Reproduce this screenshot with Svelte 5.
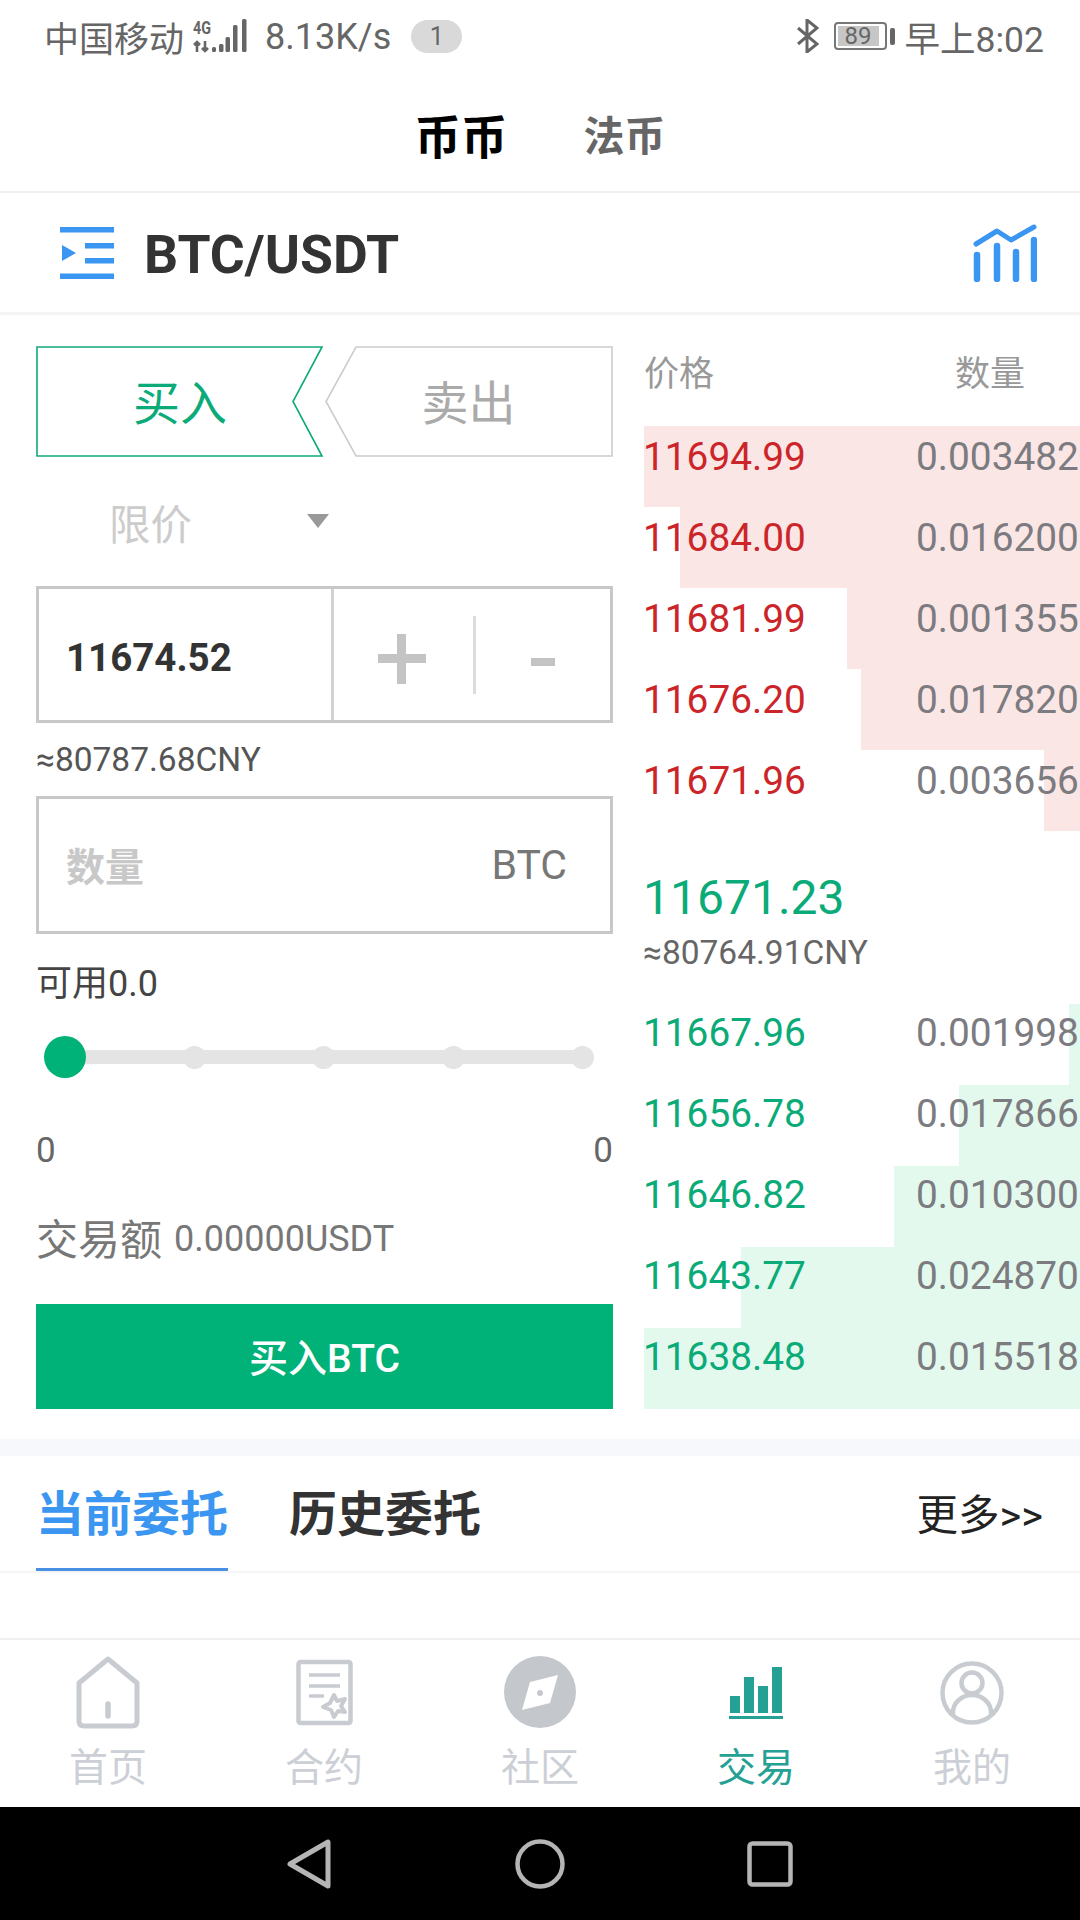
<script>
  const asks = [
    { p: '11694.99', q: '0.003482', w: 436 },
    { p: '11684.00', q: '0.016200', w: 400 },
    { p: '11681.99', q: '0.001355', w: 233 },
    { p: '11676.20', q: '0.017820', w: 219 },
    { p: '11671.96', q: '0.003656', w: 36 }
  ];
  const bids = [
    { p: '11667.96', q: '0.001998', w: 11 },
    { p: '11656.78', q: '0.017866', w: 121 },
    { p: '11646.82', q: '0.010300', w: 186 },
    { p: '11643.77', q: '0.024870', w: 339 },
    { p: '11638.48', q: '0.015518', w: 436 }
  ];
</script>

<div class="page">
  <header class="status">
    <span>中国移动</span>
    <svg class="signal" width="54" height="40" viewBox="0 -3 54 40">
      <text x="0" y="15" font-size="18" font-weight="700" textLength="18" lengthAdjust="spacingAndGlyphs" font-family="Roboto" fill="#666">4G</text>
      <path d="M4 33V23M1 26l3-3 3 3M12 22v10M9 29l3 3 3-3" fill="none" stroke="#666" stroke-width="2.6" />
      <rect x="19" y="28" width="4" height="5" rx="1.5" fill="#666" />
      <rect x="26" y="25" width="4.5" height="8" rx="1.5" fill="#666" />
      <rect x="32.5" y="18" width="4.5" height="15" rx="1.5" fill="#666" />
      <rect x="40" y="6" width="4.5" height="27" rx="1.5" fill="#666" />
      <rect x="49" y="0" width="4.5" height="33" rx="1.5" fill="#666" />
    </svg>
    <span class="speed">8.13K/s</span>
    <span class="badge">1</span>
    <span class="spacer"></span>
    <svg class="bt" width="22" height="34" viewBox="0 0 22 34">
      <path d="M1 9 20 25 10 33V1L20 9 1 25" fill="none" stroke="#666" stroke-width="3" />
    </svg>
    <span class="battery"><span class="level">89</span></span>
    <span class="nub"></span>
    <span class="time">早上8:02</span>
  </header>

  <nav class="market">
    <span class="m-on">币币</span>
    <span class="m-off">法币</span>
  </nav>

  <section class="pair">
    <svg width="54" height="52" viewBox="0 0 54 52">
      <g fill="#3a96f0">
        <rect x="0" y="0" width="54" height="5.5" />
        <rect x="25" y="16" width="29" height="5.5" />
        <rect x="25" y="31" width="29" height="5.5" />
        <rect x="0" y="46.5" width="54" height="5.5" />
        <path d="M2 18 16 26 2 34Z" />
      </g>
    </svg>
    <span class="pair-name">BTC/USDT</span>
    <span class="spacer"></span>
    <svg width="64" height="58" viewBox="0 0 64 58">
      <path d="M3 20 24 7 38 16 61 3" fill="none" stroke="#3a96f0" stroke-width="5" stroke-linecap="round" stroke-linejoin="round" />
      <g stroke="#3a96f0" stroke-width="6.5" stroke-linecap="round">
        <path d="M4 31V55M24 22V55M43 28V55M61 16V55" />
      </g>
    </svg>
  </section>

  <main class="trade">
    <div class="form">
      <div class="sides">
        <div class="side">
          <svg width="288" height="111" viewBox="0 0 288 111">
            <path d="M1 1H286L257 55.5 286 110H1Z" fill="#fff" stroke="#0fa97b" stroke-width="1.6" />
          </svg>
          <span class="side-text buy">买入</span>
        </div>
        <div class="side">
          <svg width="289" height="111" viewBox="0 0 289 111">
            <path d="M32 1H288V110H32L2 55.5Z" fill="#fff" stroke="#ccc" stroke-width="1.6" />
          </svg>
          <span class="side-text sell">卖出</span>
        </div>
      </div>

      <div class="order-type">
        <span class="limit">限价</span>
        <svg width="24" height="16" viewBox="0 0 24 16"><path d="M1 1H23L12 15Z" fill="#999" /></svg>
      </div>

      <div class="box price-box">
        <span class="price-val">11674.52</span>
        <div class="steppers">
          <span class="step plus"><i></i><b></b></span>
          <span class="step-line"></span>
          <span class="step minus"><i></i></span>
        </div>
      </div>
      <div class="approx">≈80787.68CNY</div>

      <div class="box qty-box">
        <span class="qty-label">数量</span>
        <span class="qty-unit">BTC</span>
      </div>

      <div class="avail">可用0.0</div>

      <div class="slider">
        <span class="thumb"></span>
        <span class="dot"></span>
        <span class="dot"></span>
        <span class="dot"></span>
        <span class="dot"></span>
      </div>

      <div class="ends"><span>0</span><span>0</span></div>

      <div class="amount"><span class="amount-label">交易额</span><span class="amount-val">0.00000USDT</span></div>

      <button class="submit">买入BTC</button>
    </div>

    <div class="book">
      <div class="book-head"><span class="h-price">价格</span><span class="h-qty">数量</span></div>
      {#each asks as r}
        <div class="row">
          <span class="bar ask" style="width:{r.w}px"></span>
          <span class="r-p red">{r.p}</span>
          <span class="r-q red-q">{r.q}</span>
        </div>
      {/each}
      <div class="mid">
        <div class="mid-price">11671.23</div>
        <div class="mid-cny">≈80764.91CNY</div>
      </div>
      {#each bids as r}
        <div class="row">
          <span class="bar bid" style="width:{r.w}px"></span>
          <span class="r-p green">{r.p}</span>
          <span class="r-q">{r.q}</span>
        </div>
      {/each}
    </div>
  </main>

  <div class="band"></div>

  <section class="orders">
    <span class="o-tab o-on">当前委托</span>
    <span class="o-tab">历史委托</span>
    <span class="spacer"></span>
    <span class="more">更多&gt;&gt;</span>
  </section>
  <div class="empty"></div>

  <footer class="tabbar">
    <div class="tab">
      <svg width="80" height="80" viewBox="0 0 80 80">
        <path d="M40 7 69 31V69Q69 74 64 74H16Q11 74 11 69V31Z" fill="none" stroke="#c8ccd1" stroke-width="5" stroke-linejoin="round" />
        <path d="M40 52V64" stroke="#c8ccd1" stroke-width="5.5" stroke-linecap="round" />
      </svg>
      <span>首页</span>
    </div>
    <div class="tab">
      <svg width="80" height="80" viewBox="0 0 80 80">
        <rect x="14.5" y="10" width="52" height="61" rx="2" fill="none" stroke="#c8ccd1" stroke-width="4.5" />
        <path d="M25 23H56M25 34H56M25 44H40" stroke="#c8ccd1" stroke-width="3.5" />
        <path d="M50 43 53 49 61 47 57 54 61 60 54 59 50 65 47 58 39 55 46 51Z" fill="none" stroke="#c8ccd1" stroke-width="4" stroke-linejoin="round" />
      </svg>
      <span>合约</span>
    </div>
    <div class="tab">
      <svg width="80" height="80" viewBox="0 0 80 80">
        <circle cx="40" cy="40" r="36" fill="#c4c7cb" />
        <path d="M30 30 58 23 50 51 22 58Z" fill="#fff" />
        <circle cx="40" cy="41" r="3" fill="#c4c7cb" />
      </svg>
      <span>社区</span>
    </div>
    <div class="tab active">
      <svg width="80" height="80" viewBox="0 0 80 80">
        <g fill="#25a094">
          <rect x="14" y="44" width="10" height="17" />
          <rect x="28" y="25" width="10" height="36" />
          <rect x="42" y="34" width="10" height="27" />
          <rect x="56" y="15" width="10" height="46" />
          <rect x="13" y="64" width="54" height="3" />
        </g>
      </svg>
      <span>交易</span>
    </div>
    <div class="tab">
      <svg width="80" height="80" viewBox="0 0 80 80">
        <circle cx="40" cy="41" r="29.5" fill="none" stroke="#c8ccd1" stroke-width="4.5" />
        <circle cx="40" cy="31" r="10.5" fill="none" stroke="#c8ccd1" stroke-width="4.5" />
        <path d="M21 62C20 50 31 43 40 43 49 43 60 50 59 62" fill="none" stroke="#c8ccd1" stroke-width="4.5" />
      </svg>
      <span>我的</span>
    </div>
  </footer>

  <div class="sysnav">
    <svg width="46" height="52" viewBox="0 0 46 52">
      <path d="M3 26 41 4V48Z" fill="none" stroke="#b5b5b5" stroke-width="5" stroke-linejoin="round" />
    </svg>
    <svg width="50" height="50" viewBox="0 0 50 50">
      <circle cx="25" cy="25" r="22.5" fill="none" stroke="#b5b5b5" stroke-width="4.5" />
    </svg>
    <svg width="46" height="46" viewBox="0 0 46 46">
      <rect x="2.5" y="2.5" width="41" height="41" rx="3" fill="none" stroke="#b5b5b5" stroke-width="4.5" />
    </svg>
  </div>
</div>

<style>
  :global(body) {
    margin: 0;
    background: #fff;
  }
  .page {
    width: 1080px;
    height: 1920px;
    display: flex;
    flex-direction: column;
    overflow: hidden;
    background: #fff;
    font-family: Roboto, "Noto Sans CJK SC", sans-serif;
    color: #333;
  }
  .spacer {
    flex: 1;
  }

  /* status bar */
  .status {
    height: 75px;
    display: flex;
    align-items: center;
    padding: 0 36px 3px 44px;
    font-size: 35px;
    color: #666;
    box-sizing: border-box;
  }
  .signal {
    margin-left: 9px;
  }
  .speed {
    margin-left: 18px;
    margin-top: 1px;
    font-size: 36px;
  }
  .badge {
    margin-left: 20px;
    width: 51px;
    height: 33px;
    border-radius: 17px;
    background: #d9d9d9;
    font-size: 25px;
    display: flex;
    align-items: center;
    justify-content: center;
  }
  .battery {
    width: 53px;
    height: 28px;
    margin-left: 15px;
    box-sizing: border-box;
    border: 2px solid #777;
    border-radius: 4px;
    padding: 2px;
    display: flex;
  }
  .level {
    flex: 0 0 41px;
    background: #c6c6c6;
    font-size: 24px;
    line-height: 20px;
    text-align: center;
  }
  .nub {
    width: 5px;
    height: 17px;
    margin-left: 3px;
    background: #666;
    border-radius: 2px;
  }
  .time {
    margin-left: 10px;
    font-size: 35.5px;
  }

  /* market tabs */
  .market {
    height: 118px;
    box-sizing: border-box;
    border-bottom: 2px solid #f0f0f0;
    display: flex;
    align-items: center;
    justify-content: center;
    gap: 76px;
    font-weight: 700;
  }
  .m-on {
    font-size: 46.5px;
    color: #000;
  }
  .m-off {
    font-size: 41px;
    color: #666;
  }

  /* pair */
  .pair {
    height: 122px;
    box-sizing: border-box;
    border-bottom: 3px solid #f5f5f5;
    display: flex;
    align-items: center;
    padding: 1px 43px 0 60px;
  }
  .pair-name {
    margin-left: 30px;
    margin-top: 2px;
    font-size: 53.5px;
    font-weight: 700;
    color: #333;
  }

  /* trade */
  .trade {
    display: flex;
    padding-bottom: 30px;
  }
  .form {
    width: 577px;
    margin-left: 36px;
    padding-top: 31px;
    display: flex;
    flex-direction: column;
  }
  .sides {
    display: flex;
    height: 111px;
  }
  .side {
    display: grid;
    place-items: center;
    height: 111px;
  }
  .side > * {
    grid-area: 1 / 1;
  }
  .side-text {
    font-size: 47px;
    margin-bottom: 4px;
    position: relative;
  }
  .buy {
    color: #0aab78;
  }
  .sell {
    color: #aaa;
  }
  .order-type {
    height: 129px;
    display: flex;
    align-items: center;
    padding-left: 73px;
    box-sizing: border-box;
  }
  .limit {
    font-size: 41.5px;
    color: #ccc;
    width: 197px;
  }
  .order-type svg {
    margin-bottom: 1px;
  }
  .box {
    height: 137px;
    box-sizing: border-box;
    border: 3px solid #c8c8c8;
    display: flex;
    align-items: center;
  }
  .price-box {
    padding-left: 27px;
  }
  .price-val {
    width: 265px;
    font-size: 38.5px;
    font-weight: 700;
    color: #333;
    margin-top: 5px;
  }
  .steppers {
    flex: 1;
    align-self: stretch;
    border-left: 3px solid #d2d2d2;
    display: flex;
    align-items: center;
  }
  .step {
    position: relative;
    display: block;
    height: 50px;
    margin-top: 8px;
  }
  .plus {
    width: 139px;
  }
  .minus {
    width: 100px;
  }
  .step i {
    position: absolute;
    background: #c4c4c4;
    left: 44px;
    top: 20px;
    width: 48px;
    height: 9px;
  }
  .step b {
    position: absolute;
    background: #c4c4c4;
    left: 63px;
    top: 0;
    width: 9px;
    height: 50px;
  }
  .minus i {
    left: 55px;
    top: 24px;
    width: 24px;
    height: 8px;
  }
  .step-line {
    width: 3px;
    height: 78px;
    background: #dcdcdc;
  }
  .approx {
    height: 73px;
    line-height: 73px;
    font-size: 33.5px;
    color: #555;
  }
  .qty-box {
    height: 138px;
    justify-content: space-between;
    padding: 0 43px 2px 27px;
  }
  .qty-label {
    font-size: 39px;
    font-weight: 700;
    color: #c8c8c8;
  }
  .qty-unit {
    font-size: 41px;
    color: #777;
    margin-top: 1px;
  }
  .avail {
    height: 97px;
    line-height: 100px;
    font-size: 36px;
    color: #444;
  }
  .slider {
    height: 52px;
    margin-bottom: 42px;
    padding: 0 19px 0 8px;
    display: flex;
    align-items: center;
    justify-content: space-between;
    position: relative;
  }
  .slider::before {
    content: "";
    position: absolute;
    left: 30px;
    right: 30px;
    top: 19px;
    height: 14px;
    background: #e4e4e4;
  }
  .thumb {
    width: 42px;
    height: 42px;
    margin-right: -10px;
    border-radius: 50%;
    background: #00b277;
    position: relative;
  }
  .dot {
    width: 23px;
    height: 23px;
    border-radius: 50%;
    background: #e4e4e4;
    position: relative;
  }
  .ends {
    height: 50px;
    line-height: 52px;
    display: flex;
    justify-content: space-between;
    font-size: 35px;
    color: #666;
  }
  .amount {
    height: 66px;
    margin-top: 28px;
    margin-bottom: 2px;
    display: flex;
    align-items: center;
    color: #777;
  }
  .amount-label {
    font-size: 42px;
    margin-right: 12px;
  }
  .amount-val {
    font-size: 36px;
    margin-top: 6px;
  }
  .submit {
    margin-top: 33px;
    height: 105px;
    border: 0;
    padding: 0 0 4px;
    background: #00b277;
    color: #fff;
    font: 500 39px Roboto, "Noto Sans CJK SC", sans-serif;
  }

  /* order book */
  .book {
    width: 436px;
    margin-left: 31px;
    display: flex;
    flex-direction: column;
  }
  .book-head {
    height: 111px;
    font-size: 35px;
    color: #999;
    display: flex;
    align-items: center;
    box-sizing: border-box;
  }
  .h-price {
    width: 311px;
  }
  .row {
    position: relative;
    height: 81px;
    display: flex;
    line-height: 58px;
    font-size: 38.8px;
    white-space: nowrap;
  }
  .bar {
    position: absolute;
    right: 0;
    top: 0;
    bottom: 0;
  }
  .ask {
    background: #fbe6e6;
  }
  .bid {
    background: #e3f9ee;
  }
  .r-p {
    position: relative;
    margin-left: -1px;
    width: 273px;
  }
  .r-q {
    position: relative;
    color: #7b7b80;
  }
  .red {
    color: #cc2529;
    line-height: 62px;
  }
  .red-q {
    line-height: 62px;
  }
  .green {
    color: #0aab78;
  }
  .mid {
    height: 173px;
    box-sizing: border-box;
    padding-top: 34px;
  }
  .mid-price {
    font-size: 48px;
    line-height: 66px;
    margin-left: -1px;
    color: #0aab78;
  }
  .mid-cny {
    font-size: 33.5px;
    line-height: 44px;
    margin-left: -1px;
    color: #666;
  }

  .band {
    height: 17px;
    background: #f7f8fb;
  }

  /* orders */
  .orders {
    height: 117px;
    box-sizing: border-box;
    border-bottom: 2px solid #f5f5f5;
    display: flex;
    padding: 0 37px 0 36px;
  }
  .o-tab {
    height: 115px;
    line-height: 117px;
    box-sizing: border-box;
    font-size: 48px;
    font-weight: 700;
    color: #333;
    margin-right: 61px;
  }
  .o-on {
    color: #3a96f0;
    border-bottom: 3px solid #4a90e2;
  }
  .more {
    font-size: 41.5px;
    line-height: 119px;
    color: #222;
  }
  .empty {
    height: 65px;
  }

  /* tab bar */
  .tabbar {
    height: 169px;
    box-sizing: border-box;
    border-top: 2px solid #f0f0f0;
    display: flex;
    padding-top: 12px;
  }
  .tab {
    flex: 1;
    display: flex;
    flex-direction: column;
    align-items: center;
    font-size: 39px;
    color: #ccd0d6;
  }
  .tab span {
    line-height: 52px;
    margin-top: 10px;
  }
  .active {
    color: #25a094;
  }
  .sysnav {
    flex: 1;
    background: #000;
    display: flex;
    align-items: center;
    justify-content: center;
    gap: 182px;
    padding-right: 1px;
  }
</style>
